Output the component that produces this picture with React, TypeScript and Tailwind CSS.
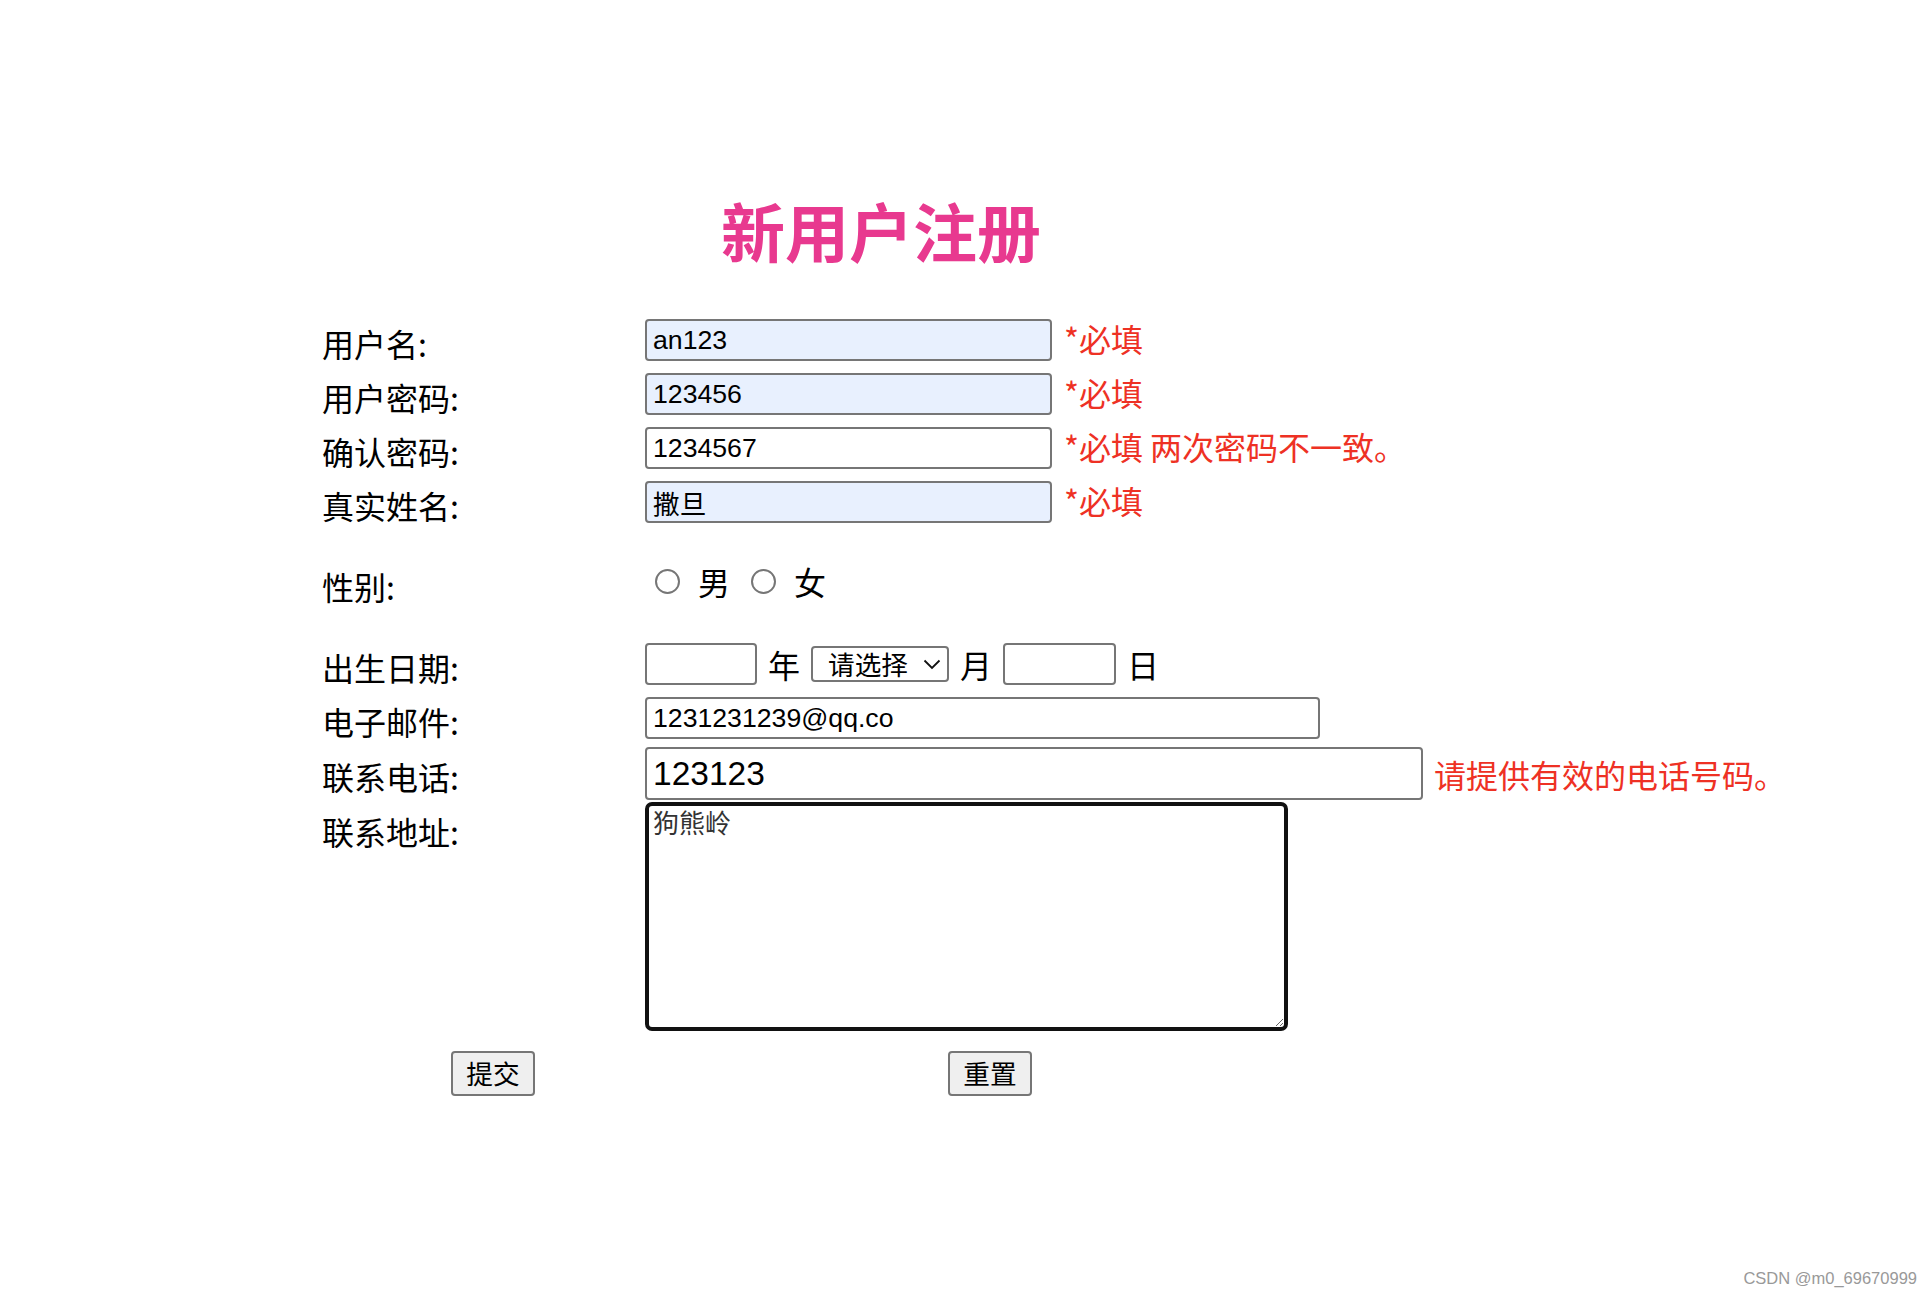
const cjk = "font-['Microsoft_YaHei','Noto_Sans_CJK_SC',sans-serif]";
const latin = "font-['Liberation_Sans','Noto_Sans_CJK_SC',sans-serif]";

const Label = ({ text }: { text: string }) => (
  <div className={`w-[323px] shrink-0 pt-[5px] text-[32px] leading-[32px] text-black ${cjk}`}>{text}</div>
);

const Hint = ({ text }: { text: string }) => (
  <span className={`-mt-[5px] ml-[12px] whitespace-nowrap text-[32px] leading-[32px] text-[#ee3124] ${cjk}`}>{text}</span>
);

const TextInput = ({ value, filled = false }: { value: string; filled?: boolean }) => (
  <input
    readOnly
    defaultValue={value}
    className={`h-[42px] w-[407px] shrink-0 rounded-[4px] border-2 border-[#767676] px-[6px] text-[26.67px] text-black outline-none ${latin} ${
      filled ? 'bg-[#e8f0fe]' : 'bg-white'
    }`}
  />
);

const Radio = ({ label }: { label: string }) => (
  <div className="flex items-center">
    <span className="ml-[10px] mr-[18px] h-[25px] w-[25px] rounded-full border-2 border-[#767676] bg-white" />
    <span className={`mr-[11px] text-[32px] leading-[32px] ${cjk}`}>{label}</span>
  </div>
);

const App = () => {
  return (
    <div className="relative min-h-[1294px] bg-white">
      <div className="ml-[322px] pt-[197px]">
        <h1 className={`w-[1118px] text-center text-[64px] font-bold leading-none text-[#e8398f] ${cjk}`}>新用户注册</h1>

        <div className="mt-[52px]">
          <div className="flex h-[54px] items-center">
            <Label text="用户名:" />
            <TextInput value="an123" filled />
            <Hint text="*必填" />
          </div>
          <div className="flex h-[54px] items-center">
            <Label text="用户密码:" />
            <TextInput value="123456" filled />
            <Hint text="*必填" />
          </div>
          <div className="flex h-[54px] items-center">
            <Label text="确认密码:" />
            <TextInput value="1234567" />
            <Hint text="*必填 两次密码不一致。" />
          </div>
          <div className="flex h-[54px] items-center">
            <Label text="真实姓名:" />
            <TextInput value="撒旦" filled />
            <Hint text="*必填" />
          </div>

          <div className="flex h-[108px] items-center">
            <Label text="性别:" />
            <div className="-mt-[4px] flex items-center">
              <Radio label="男" />
              <Radio label="女" />
            </div>
          </div>

          <div className="flex h-[54px] items-center">
            <Label text="出生日期:" />
            <div className={`flex items-center gap-[11px] text-[32px] leading-[32px] ${cjk}`}>
              <input readOnly className="h-[42px] w-[112px] rounded-[4px] border-2 border-[#767676] bg-white outline-none" />
              <span>年</span>
              <div className="flex h-[36px] w-[138px] items-center justify-between rounded-[4px] border-2 border-[#767676] bg-white pl-[15px] pr-[6px]">
                <span className="text-[26.67px] leading-none">请选择</span>
                <svg width="18" height="11" viewBox="0 0 18 11" fill="none">
                  <path d="M1.5 1.5 9 9l7.5-7.5" stroke="#111" strokeWidth="1.8" />
                </svg>
              </div>
              <span>月</span>
              <input readOnly className="h-[42px] w-[113px] rounded-[4px] border-2 border-[#767676] bg-white outline-none" />
              <span>日</span>
            </div>
          </div>

          <div className="flex h-[54px] items-center">
            <Label text="电子邮件:" />
            <input
              readOnly
              defaultValue="1231231239@qq.co"
              className={`h-[42px] w-[675px] shrink-0 rounded-[4px] border-2 border-[#767676] bg-white px-[6px] text-[26.67px] text-black outline-none ${latin}`}
            />
          </div>

          <div className="flex h-[57px] items-center">
            <Label text="联系电话:" />
            <input
              readOnly
              defaultValue="123123"
              className={`h-[53px] w-[778px] shrink-0 rounded-[4px] border-2 border-[#767676] bg-white px-[6px] text-[33.5px] text-black outline-none ${latin}`}
            />
            <span className={`ml-[11px] whitespace-nowrap text-[32px] leading-[32px] text-[#ee3124] ${cjk}`}>请提供有效的电话号码。</span>
          </div>

          <div className="flex items-start">
            <div className={`w-[323px] shrink-0 pt-[13px] text-[32px] leading-[32px] text-black ${cjk}`}>联系地址:</div>
            <textarea
              readOnly
              defaultValue="狗熊岭"
              className={`h-[229px] w-[643px] shrink-0 rounded-[7px] border-[4px] border-[#111] bg-white px-[4px] py-0 text-[26px] leading-[32px] text-[#333] outline-none ${cjk}`}
            />
          </div>

          <div className="mt-[20px] flex">
            <button className={`ml-[129px] h-[45px] w-[84px] rounded-[4px] border-2 border-[#767676] bg-[#efefef] text-[26.67px] leading-none text-black ${cjk}`}>
              提交
            </button>
            <button className={`ml-[413px] h-[45px] w-[84px] rounded-[4px] border-2 border-[#767676] bg-[#efefef] text-[26.67px] leading-none text-black ${cjk}`}>
              重置
            </button>
          </div>
        </div>
      </div>

      <div className={`absolute bottom-[3px] right-[6px] text-[16.5px] text-[#999] ${latin}`}>CSDN @m0_69670999</div>
    </div>
  );
};

export default App;
